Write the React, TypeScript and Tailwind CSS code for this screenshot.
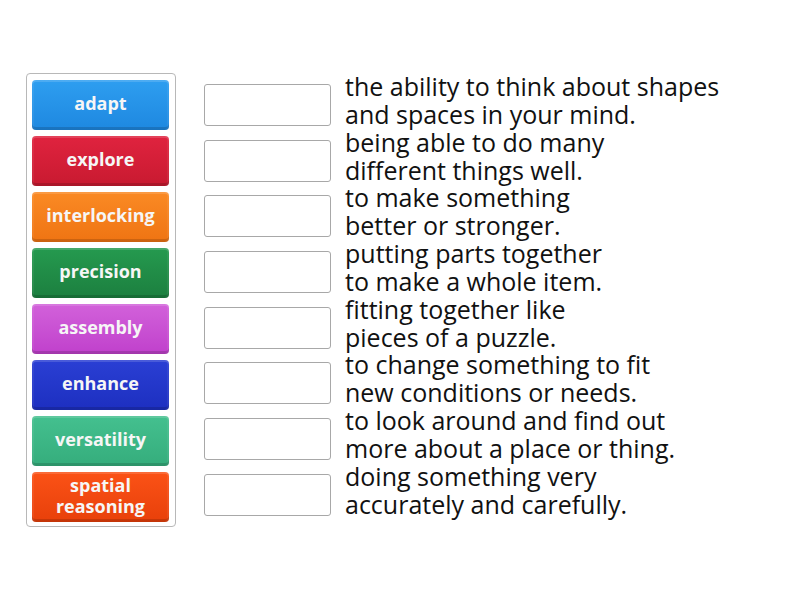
import React from "react";

const tiles: { label: string; bg: string }[] = [
  { label: "adapt", bg: "bg-gradient-to-b from-[#2e9ef0] to-[#1e88e0]" },
  { label: "explore", bg: "bg-gradient-to-b from-[#e0233f] to-[#c81a30]" },
  { label: "interlocking", bg: "bg-gradient-to-b from-[#fa8a24] to-[#ef7412]" },
  { label: "precision", bg: "bg-gradient-to-b from-[#259a4f] to-[#1c7f3f]" },
  { label: "assembly", bg: "bg-gradient-to-b from-[#d261da] to-[#c040cc]" },
  { label: "enhance", bg: "bg-gradient-to-b from-[#2a3fd4] to-[#1d2fc0]" },
  { label: "versatility", bg: "bg-gradient-to-b from-[#44c08f] to-[#35ad7c]" },
  { label: "spatial reasoning", bg: "bg-gradient-to-b from-[#fb5216] to-[#e8400a]" },
];

const defs: [string, string][] = [
  ["the ability to think about shapes", "and spaces in your mind."],
  ["being able to do many", "different things well."],
  ["to make something", "better or stronger."],
  ["putting parts together", "to make a whole item."],
  ["fitting together like", "pieces of a puzzle."],
  ["to change something to fit", "new conditions or needs."],
  ["to look around and find out", "more about a place or thing."],
  ["doing something very", "accurately and carefully."],
];

export default function App() {
  return (
    <div
      className="w-[800px] h-[600px] bg-white relative"
      style={{ fontFamily: '"Open Sans", "Noto Sans", sans-serif' }}
    >
      <div className="flex items-start pt-[73px] pl-[26px]">
        <div className="w-[150px] h-[454px] border border-[#b8b8b8] rounded-[4px] px-[5px] pt-[6px] flex flex-col gap-[6px]">
          {tiles.map((t) => (
            <div
              key={t.label}
              className={`${t.bg} h-[50px] w-[137px] rounded-[4px] flex items-center justify-center text-center text-[#f6f6f6] font-bold text-[18px] leading-[21px] pb-[3px] shadow-[inset_0_-3px_0_rgba(0,0,0,0.15),inset_0_2px_0_rgba(255,255,255,0.15),inset_2px_0_0_rgba(255,255,255,0.06),inset_-2px_0_0_rgba(255,255,255,0.06)] px-1`}
            >
              <span className="w-[110px]">{t.label}</span>
            </div>
          ))}
        </div>
        <div className="ml-[28px] flex flex-col">
          {defs.map((d, i) => (
            <div key={i} className="h-[55.7px] flex items-center">
              <div className="self-start mt-[11px] w-[127px] h-[42px] border border-[#a8a8a8] rounded-[3px] bg-white shrink-0" />
              <div className="ml-[14px] text-[25px] leading-[28px] text-[#111] -mt-[2px]">
                <div>{d[0]}</div>
                <div>{d[1]}</div>
              </div>
            </div>
          ))}
        </div>
      </div>
    </div>
  );
}
